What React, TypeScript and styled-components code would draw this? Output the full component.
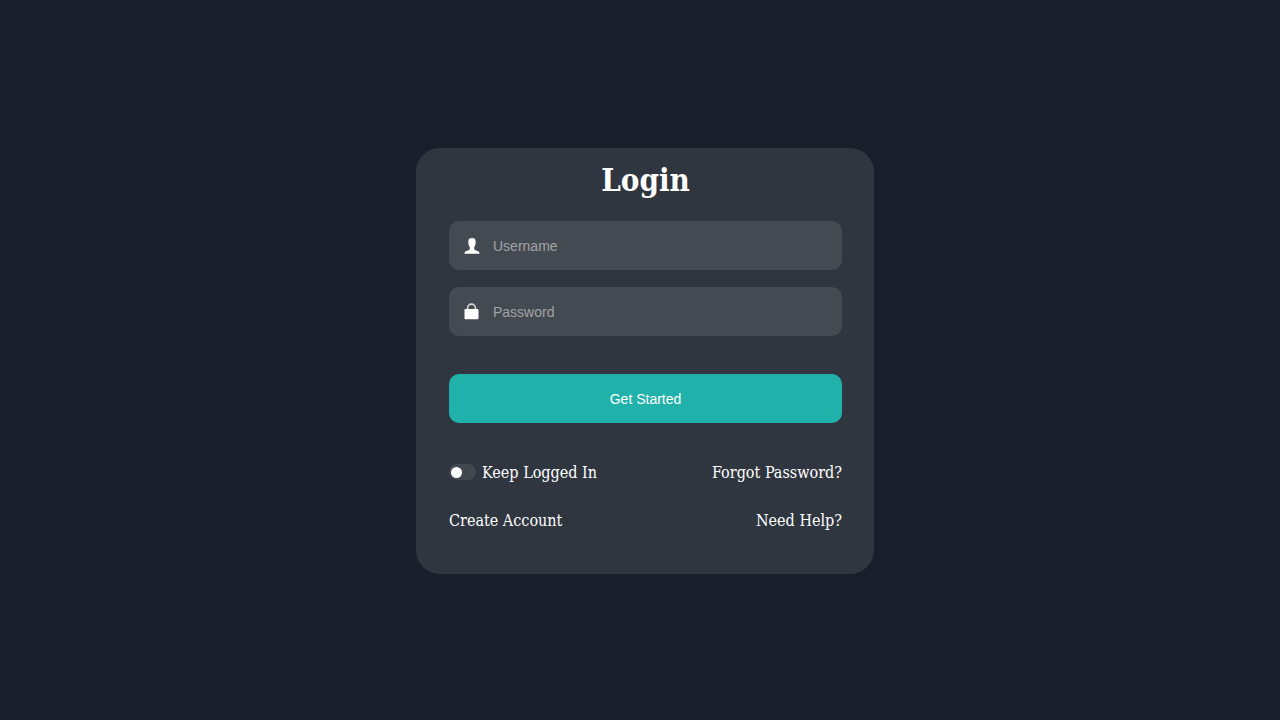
import React from "react";
import styled, { createGlobalStyle } from "styled-components";

const GlobalStyle = createGlobalStyle`
  * { box-sizing: border-box; }
  body {
    margin: 0;
    background: #191f2a;
    color: #fff;
    font-family: "DejaVu Serif Condensed", "DejaVu Serif", serif;
  }
`;

const Page = styled.main`
  min-height: 100vh;
  display: flex;
  align-items: center;
  justify-content: center;
  padding: 2px 0 0 10px;
`;

const Card = styled.form`
  width: 100%;
  max-width: 458px;
  padding: 12px 32px 41px 33px;
  border-radius: 24px;
  background: #2f363f;
  display: flex;
  flex-direction: column;
`;

const Title = styled.h1`
  margin: 0 0 21px;
  font-size: 31px;
  line-height: 40px;
  font-weight: 700;
  text-align: center;
`;

const Fields = styled.div`
  display: flex;
  flex-direction: column;
  gap: 17px;
  margin-bottom: 38px;
`;

const Field = styled.label`
  display: flex;
  align-items: center;
  gap: 13px;
  height: 49px;
  padding: 0 15px;
  border-radius: 10px;
  background: #444a51;
`;

const Icon = styled.svg`
  flex: none;
  width: 16px;
  height: 18px;
  fill: #fff;
`;

const Input = styled.input`
  flex: 1;
  min-width: 0;
  padding: 0;
  border: 0;
  outline: 0;
  background: transparent;
  color: #fff;
  font: 14px/20px "Liberation Sans", Arial, sans-serif;
  &::placeholder { color: #a3a3a5; opacity: 1; }
`;

const Submit = styled.button`
  height: 49px;
  margin-bottom: 38px;
  padding: 0;
  border: 0;
  border-radius: 10px;
  background: #20b2aa;
  color: #fff;
  font: 14px/20px "Liberation Sans", Arial, sans-serif;
  cursor: pointer;
`;

const Options = styled.div`
  display: flex;
  flex-direction: column;
  gap: 24px;
`;

const Row = styled.div`
  display: flex;
  align-items: center;
  justify-content: space-between;
  font-size: 16px;
  line-height: 24px;
`;

const Keep = styled.label`
  display: flex;
  align-items: center;
  gap: 6px;
  cursor: pointer;
`;

const Toggle = styled.input`
  appearance: none;
  display: flex;
  align-items: center;
  width: 27px;
  height: 16px;
  margin: 0 0 2px;
  padding: 0 2px;
  border-radius: 8px;
  background: #424850;
  cursor: pointer;
  &::before {
    content: "";
    width: 11px;
    height: 11px;
    border-radius: 50%;
    background: #fff;
  }
  &:checked { justify-content: flex-end; background: #20b2aa; }
`;

const TextLink = styled.a`
  color: inherit;
  text-decoration: none;
`;

export default function App() {
  return (
    <>
      <GlobalStyle />
      <Page>
        <Card onSubmit={(e: React.FormEvent) => e.preventDefault()}>
          <Title>Login</Title>
          <Fields>
            <Field>
              <Icon viewBox="0 0 16 18" aria-hidden="true">
                <path d="M8 1C5.6 1 4.3 2.2 4.3 4.4C4.3 6.8 4.6 8.8 5.8 9.9V12.2C4.8 13.8 1 13.8 0.6 15.6V16.7H15.4V15.6C15 13.8 11.2 13.8 10.2 12.2V9.9C11.4 8.8 11.7 6.8 11.7 4.4C11.7 2.2 10.4 1 8 1Z" />
              </Icon>
              <Input type="text" placeholder="Username" aria-label="Username" />
            </Field>
            <Field>
              <Icon viewBox="0 0 16 18" aria-hidden="true">
                <path d="M3.6 8V5.1A3.9 4 0 0 1 11.4 5.1V8" fill="none" stroke="#d5d7d9" strokeWidth="1.6" />
                <rect x="0.5" y="6" width="14" height="10.3" rx="1" />
              </Icon>
              <Input type="password" placeholder="Password" aria-label="Password" />
            </Field>
          </Fields>
          <Submit type="submit">Get Started</Submit>
          <Options>
            <Row>
              <Keep>
                <Toggle type="checkbox" />
                Keep Logged In
              </Keep>
              <TextLink href="#forgot">Forgot Password?</TextLink>
            </Row>
            <Row>
              <TextLink href="#create">Create Account</TextLink>
              <TextLink href="#help">Need Help?</TextLink>
            </Row>
          </Options>
        </Card>
      </Page>
    </>
  );
}
